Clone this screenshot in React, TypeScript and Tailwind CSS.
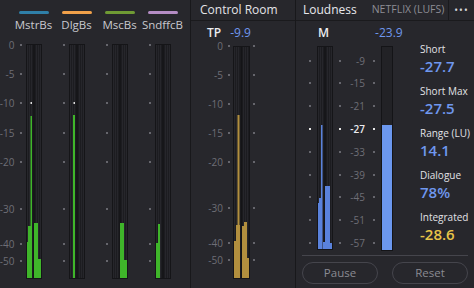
import * as React from "react";

type Tick = { y: number; label?: string; bright?: boolean };
type Bar = { x: number; w: number; top: number };

const busTicks: Tick[] = [
  { y: 1, label: "0" },
  { y: 30, label: "-5" },
  { y: 59, label: "-10" },
  { y: 89, label: "-15" },
  { y: 118, label: "-20" },
  { y: 165, label: "-30" },
  { y: 200, label: "-40" },
  { y: 217, label: "-50" },
];

const roomTicks: Tick[] = [
  { y: 0, label: "0" },
  { y: 29, label: "-5" },
  { y: 58, label: "-10" },
  { y: 87, label: "-15" },
  { y: 116, label: "-20" },
  { y: 162, label: "-30" },
  { y: 197, label: "-40" },
  { y: 214, label: "-50" },
];

const lufsTicks: Tick[] = [
  { y: 15, label: "-9" },
  { y: 37, label: "-15" },
  { y: 60, label: "-21" },
  { y: 83, label: "-27", bright: true },
  { y: 106, label: "-33" },
  { y: 129, label: "-39" },
  { y: 151, label: "-45" },
  { y: 174, label: "-51" },
  { y: 197, label: "-57" },
];

const buses = [
  {
    name: "MstrBs",
    color: "bg-[#2f7fa8]",
    labels: true,
    peak: 59,
    bars: [
      { x: 0, w: 2, top: 198 },
      { x: 2, w: 3, top: 182 },
      { x: 4.5, w: 1.5, top: 72 },
      { x: 8, w: 4, top: 179 },
      { x: 12, w: 4, top: 215 },
    ],
  },
  {
    name: "DlgBs",
    color: "bg-[#f0a04a]",
    labels: false,
    peak: 59,
    bars: [{ x: 4, w: 2, top: 71 }],
  },
  {
    name: "MscBs",
    color: "bg-[#6f9a34]",
    labels: false,
    bars: [
      { x: 8, w: 4, top: 179 },
      { x: 12, w: 3, top: 216 },
    ],
  },
  {
    name: "SndffcB",
    color: "bg-[#b48cc4]",
    labels: false,
    bars: [
      { x: 1, w: 3, top: 199 },
      { x: 3, w: 2, top: 180 },
    ],
  },
];

const roomBars: Bar[] = [
  { x: 1, w: 2, top: 195 },
  { x: 3, w: 4, top: 179 },
  { x: 4.5, w: 2, top: 69 },
  { x: 9, w: 3, top: 180 },
  { x: 11, w: 3, top: 176 },
  { x: 14, w: 3, top: 212 },
];

const mBars: Bar[] = [
  { x: 0, w: 2, top: 157 },
  { x: 2, w: 2, top: 152 },
  { x: 4, w: 1.5, top: 79 },
  { x: 6, w: 2, top: 196 },
  { x: 8, w: 3, top: 140 },
  { x: 11, w: 2, top: 140 },
  { x: 13, w: 3, top: 197 },
];

const stats = [
  { label: "Short", value: "-27.7", color: "text-[#6f97ee]" },
  { label: "Short Max", value: "-27.5", color: "text-[#6f97ee]" },
  { label: "Range (LU)", value: "14.1", color: "text-[#6f97ee]" },
  { label: "Dialogue", value: "78%", color: "text-[#6f97ee]" },
  { label: "Integrated", value: "-28.6", color: "text-[#e8c548]" },
];

function Dot({ bright }: { bright?: boolean }) {
  return <span className={`block h-[2px] w-[2px] ${bright ? "bg-[#e6e6e6]" : "bg-[#66666d]"}`} />;
}

function MeterBars({ w, h, bars, color, peak }: { w: number; h: number; bars: Bar[]; color: string; peak?: number }) {
  return (
    <svg width={w} height={h} className="block">
      <rect x={0} y={0} width={w} height={h} fill="#1c1c20" />
      {[1.5, 3.5, 5.5, 10.5, 12.5, 14.5].map((x) => (
        <line key={x} x1={x} y1={0} x2={x} y2={h} stroke="#26262b" strokeWidth={1} />
      ))}
      <line x1={w / 2} y1={0} x2={w / 2} y2={h} stroke="#141417" strokeWidth={1.5} />
      {bars.map((b, i) => (
        <rect key={i} x={b.x} y={b.top} width={b.w} height={h - b.top} fill={color} />
      ))}
      {peak !== undefined && <rect x={4.5} y={peak - 1} width={1.5} height={2} fill="#dcdcdc" />}
      <rect x={0.5} y={0.5} width={w - 1} height={h - 1} fill="none" stroke="#151518" />
    </svg>
  );
}

function BusColumn({ bus }: { bus: (typeof buses)[number] }) {
  return (
    <div className="flex flex-col items-center">
      <div className={`h-[3px] w-[30px] rounded-full ${bus.color}`} />
      <div className="mt-[4px] text-[11.5px] leading-[14px] text-[#c9c9cf]">{bus.name}</div>
      <div className="relative mt-[12px] h-[235px] w-[16px]">
        {busTicks.map((t) => (
          <div
            key={t.y}
            className="absolute right-full mr-[4px] flex items-center gap-[5px]"
            style={{ top: t.y, transform: "translateY(-50%)" }}
          >
            {bus.labels && <span className="text-[10px] leading-none text-[#6e6e76]">{t.label}</span>}
            <Dot />
          </div>
        ))}
        <MeterBars w={16} h={235} bars={bus.bars} color="#3fb52a" peak={bus.peak} />
      </div>
    </div>
  );
}

function ControlRoom() {
  return (
    <div className="flex w-[105px] shrink-0 flex-col border-r border-[#18181b]">
      <div className="flex h-[21px] items-center border-b border-[#1a1a1d] pl-[9px] text-[12px] text-[#e4e4e8]">
        Control Room
      </div>
      <div className="mt-[5px] flex items-center pl-[16px] text-[12px] leading-[14px]">
        <span className="font-semibold text-[#ececf0]">TP</span>
        <span className="ml-[9px] text-[#6f97ee]">-9.9</span>
      </div>
      <div className="relative ml-[42px] mt-[6px] h-[233px] w-[17px]">
        {roomTicks.map((t) => (
          <React.Fragment key={t.y}>
            <div
              className="absolute right-full mr-[3px] flex items-center gap-[5px]"
              style={{ top: t.y, transform: "translateY(-50%)" }}
            >
              <span className="text-[10px] leading-none text-[#6e6e76]">{t.label}</span>
              <Dot />
            </div>
            <div className="absolute left-full ml-[3px]" style={{ top: t.y, transform: "translateY(-50%)" }}>
              <Dot />
            </div>
          </React.Fragment>
        ))}
        <MeterBars w={17} h={233} bars={roomBars} color="#b28f3e" />
      </div>
    </div>
  );
}

function Loudness() {
  return (
    <div className="flex min-w-0 flex-1 flex-col">
      <div className="flex h-[21px] items-center border-b border-[#1a1a1d]">
        <span className="pl-[7px] text-[12px] text-[#e8e8ec]">Loudness</span>
        <span className="ml-[15px] whitespace-nowrap text-[10.5px] text-[#8d8d95]">NETFLIX (LUFS)</span>
        <div className="ml-auto flex h-full w-[26px] items-center justify-center border-l border-[#1a1a1d] text-[10px] tracking-[1px] text-[#d8d8dc]">
          •••
        </div>
      </div>
      <div className="flex h-[234px]">
        <div className="flex w-[98px] shrink-0 flex-col">
          <div className="mt-[5px] flex whitespace-nowrap text-[12px] leading-[14px]">
            <span className="ml-[22px] font-semibold text-[#ececf0]">M</span>
            <span className="ml-[46px] text-[#6f97ee]">-23.9</span>
          </div>
          <div className="mt-[6px] flex">
            <div className="relative ml-[21px] h-[204px] w-[16px]">
              {lufsTicks.map((t) => (
                <React.Fragment key={t.y}>
                  <div className="absolute right-full mr-[6px]" style={{ top: t.y, transform: "translateY(-50%)" }}>
                    <Dot bright={t.bright} />
                  </div>
                  <div
                    className="absolute left-full ml-[6px] flex items-center"
                    style={{ top: t.y, transform: "translateY(-50%)" }}
                  >
                    <Dot bright={t.bright} />
                    <span
                      className={`ml-[2px] w-[22px] text-right text-[10px] leading-none ${
                        t.bright ? "font-semibold text-[#ececf0]" : "text-[#6e6e76]"
                      }`}
                    >
                      {t.label}
                    </span>
                    <span className="ml-[8px]">
                      <Dot bright={t.bright} />
                    </span>
                  </div>
                </React.Fragment>
              ))}
              <MeterBars w={16} h={204} bars={mBars} color="#5a82dc" />
            </div>
            <div className="ml-[48px] flex h-[205px] w-[12px] flex-col border border-[#141417] bg-[#222226]">
              <div className="h-[78px]" />
              <div className="flex-1 bg-[#6b97ee]" />
            </div>
          </div>
        </div>
        <div className="ml-[26px] mt-[21px] flex flex-col gap-[8px] whitespace-nowrap">
          {stats.map((s) => (
            <div key={s.label} className="flex flex-col">
              <span className="text-[10px] leading-[14px] text-[#e2e2e6]">{s.label}</span>
              <span className={`text-[15px] font-semibold leading-[20px] ${s.color}`}>{s.value}</span>
            </div>
          ))}
        </div>
      </div>
      <div className="mx-[6px] border-t border-[#45454c]" />
      <div className="mt-[6px] flex gap-[14px] px-[6px]">
        <button className="h-[22px] w-[76px] shrink-0 rounded-full border border-[#45454c] text-[11.5px] text-[#8a8a92]">
          Pause
        </button>
        <button className="h-[22px] w-[76px] shrink-0 rounded-full border border-[#45454c] text-[11.5px] text-[#8a8a92]">
          Reset
        </button>
      </div>
    </div>
  );
}

export default function App() {
  return (
    <div className="flex h-[288px] w-[474px] overflow-hidden bg-[#27272c] font-['Open_Sans',sans-serif]">
      <div className="w-[191px] shrink-0 border-r border-[#18181b] pt-[11px]">
        <div className="ml-[12px] grid w-[172px] grid-cols-4">
          {buses.map((b) => (
            <BusColumn key={b.name} bus={b} />
          ))}
        </div>
      </div>
      <ControlRoom />
      <Loudness />
    </div>
  );
}
